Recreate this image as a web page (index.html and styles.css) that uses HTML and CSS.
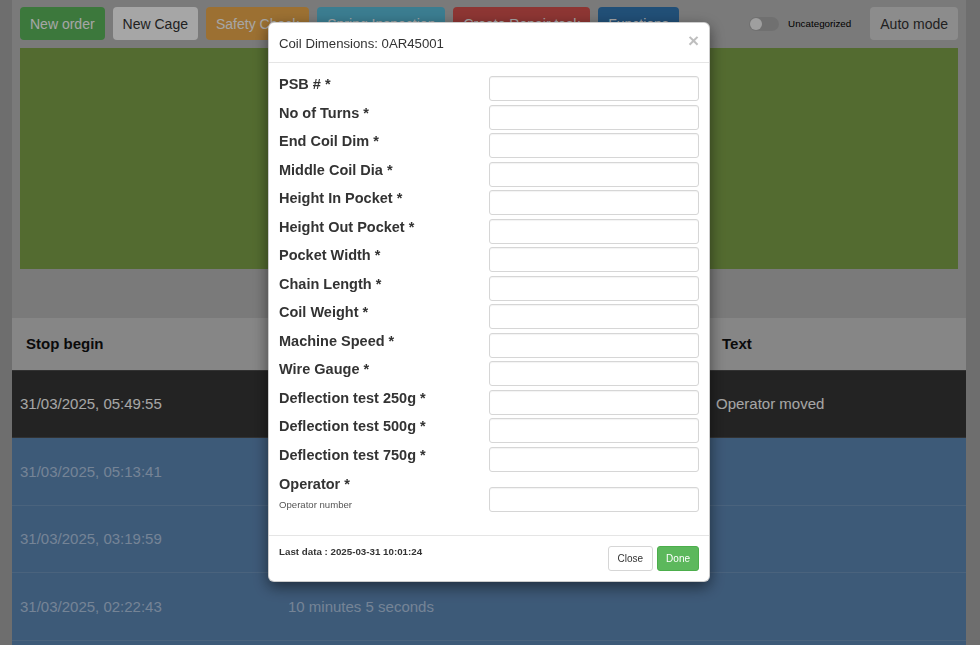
FILE: index.html
```html
<!DOCTYPE html>
<html lang="en">
<head>
    <meta charset="UTF-8">
    <meta name="viewport" content="width=device-width, initial-scale=1.0">
    <title>Stops</title>
    <link rel="stylesheet" href="styles.css">
</head>
<body>
    <div class="page">
        <div class="toolbar">
            <button class="btn btn-success">New order</button>
            <button class="btn btn-default">New Cage</button>
            <button class="btn btn-warning">Safety Check</button>
            <button class="btn btn-info">Spring Inspection</button>
            <button class="btn btn-danger">Create Repair task</button>
            <button class="btn btn-primary">Functions</button>
            <div class="toolbar-right">
                <span class="switch"></span>
                <span class="switch-label">Uncategorized</span>
                <button class="btn btn-active">Auto mode</button>
            </div>
        </div>

        <div class="status-panel"></div>

        <table class="stops">
            <colgroup>
                <col class="col-begin">
                <col class="col-duration">
                <col class="col-reason">
                <col class="col-text">
            </colgroup>
            <thead>
                <tr>
                    <th>Stop begin</th>
                    <th></th>
                    <th></th>
                    <th>Text</th>
                </tr>
            </thead>
            <tbody>
                <tr class="row-dark">
                    <td>31/03/2025, 05:49:55</td>
                    <td></td>
                    <td></td>
                    <td>Operator moved</td>
                </tr>
                <tr class="row-blue">
                    <td>31/03/2025, 05:13:41</td>
                    <td></td>
                    <td></td>
                    <td></td>
                </tr>
                <tr class="row-blue">
                    <td>31/03/2025, 03:19:59</td>
                    <td></td>
                    <td></td>
                    <td></td>
                </tr>
                <tr class="row-blue">
                    <td>31/03/2025, 02:22:43</td>
                    <td>10 minutes 5 seconds</td>
                    <td></td>
                    <td></td>
                </tr>
                <tr class="row-blue">
                    <td></td>
                    <td></td>
                    <td></td>
                    <td></td>
                </tr>
            </tbody>
        </table>
    </div>

    <div class="modal-backdrop"></div>

    <div class="modal">
        <div class="modal-dialog">
            <div class="modal-header">
                <h4 class="modal-title">Coil Dimensions: 0AR45001</h4>
                <button class="close">&times;</button>
            </div>
            <form class="modal-body">
                <label>PSB # *</label><input type="text">
                <label>No of Turns *</label><input type="text">
                <label>End Coil Dim *</label><input type="text">
                <label>Middle Coil Dia *</label><input type="text">
                <label>Height In Pocket *</label><input type="text">
                <label>Height Out Pocket *</label><input type="text">
                <label>Pocket Width *</label><input type="text">
                <label>Chain Length *</label><input type="text">
                <label>Coil Weight *</label><input type="text">
                <label>Machine Speed *</label><input type="text">
                <label>Wire Gauge *</label><input type="text">
                <label>Deflection test 250g *</label><input type="text">
                <label>Deflection test 500g *</label><input type="text">
                <label>Deflection test 750g *</label><input type="text">
                <div class="operator">
                    <label>Operator *</label>
                    <small>Operator number</small>
                </div>
                <input type="text" class="operator-input">
            </form>
            <div class="modal-footer">
                <span class="last-data">Last data : 2025-03-31 10:01:24</span>
                <div class="footer-buttons">
                    <button class="btn-sm btn-close">Close</button>
                    <button class="btn-sm btn-done">Done</button>
                </div>
            </div>
        </div>
    </div>
</body>
</html>
```

FILE: styles.css
```css
html, body {
    margin: 0;
    height: 100%;
    overflow: hidden;
}

body {
    background: #aaaaaa;
    font-family: "Liberation Sans", Arial, sans-serif;
    color: #333;
}

.page {
    margin: 0 14px 0 12px;
    min-height: 100%;
    background: #bcbcbc;
}

.toolbar {
    display: flex;
    align-items: center;
    gap: 8px;
    padding: 7px 8px 0;
}

.btn {
    height: 33px;
    padding: 0 10px;
    border: none;
    border-radius: 4px;
    font-family: "Liberation Sans", Arial, sans-serif;
    font-size: 14px;
    color: #fff;
}

.btn-success { background: #5cb85c; }
.btn-default { background: #fff; color: #333; }
.btn-warning { background: #f0ad4e; }
.btn-info { background: #5bc0de; }
.btn-danger { background: #d9534f; }
.btn-primary { background: #337ab7; }
.btn-active { background: #d8d8d8; color: #333; }

.toolbar-right {
    margin-left: auto;
    display: flex;
    align-items: center;
}

.switch {
    position: relative;
    width: 30px;
    height: 14px;
    border-radius: 7px;
    background: rgba(0, 0, 0, 0.08);
}

.switch::before {
    content: "";
    position: absolute;
    top: 1px;
    left: 1px;
    width: 12px;
    height: 12px;
    border-radius: 50%;
    background: #f4f4f4;
}

.switch-label {
    font-size: 9.8px;
    color: #000;
    margin: 0 19px 0 9px;
}

.status-panel {
    margin: 8px 8px 0;
    height: 221px;
    background: #80a54a;
}

.stops {
    width: 100%;
    margin-top: 49px;
    border-collapse: collapse;
    table-layout: fixed;
    font-size: 15px;
}

.col-begin { width: 268px; }
.col-duration { width: 214px; }
.col-reason { width: 214px; }
.col-text { width: 258px; }

.stops th {
    height: 51.5px;
    padding: 0 14px;
    text-align: left;
    font-weight: bold;
    color: #111;
    background: #cecece;
}

.stops td {
    height: 66.5px;
    padding: 0 8px;
    border-top: 1px solid rgba(255, 255, 255, 0.12);
    white-space: nowrap;
}

.row-dark td {
    background: #363636;
    color: #fff;
}

.row-blue td {
    background: #5f8ab9;
    color: #b4cbe6;
}

.modal-backdrop {
    position: fixed;
    top: 0;
    left: 0;
    right: 0;
    bottom: 0;
    background: rgba(0, 0, 0, 0.35);
}

.modal {
    position: fixed;
    top: 0;
    left: 0;
    right: 0;
    bottom: 0;
    overflow: hidden;
}

.modal-dialog {
    width: 442px;
    box-sizing: border-box;
    margin: 22px 0 0 268px;
    background: #fff;
    border: 1px solid rgba(0, 0, 0, 0.2);
    border-radius: 6px;
    box-shadow: 0 5px 15px rgba(0, 0, 0, 0.5);
}

.modal-header {
    display: flex;
    justify-content: space-between;
    align-items: flex-start;
    padding: 13px 10px 11px;
    border-bottom: 1px solid #e5e5e5;
}

.modal-title {
    margin: 0;
    font-size: 13.2px;
    font-weight: normal;
    color: #333;
}

.close {
    margin-top: -5px;
    padding: 0;
    border: none;
    background: none;
    font-family: "Liberation Sans", Arial, sans-serif;
    font-size: 19px;
    font-weight: bold;
    line-height: 1;
    color: #000;
    opacity: 0.25;
}

.modal-body {
    display: grid;
    grid-template-columns: 210px 210px;
    row-gap: 3.5px;
    align-items: start;
    padding: 13px 10px 23px;
    margin: 0;
}

.modal-body label {
    font-size: 14.5px;
    font-weight: bold;
    color: #333;
}

.modal-body input {
    height: 25px;
    box-sizing: border-box;
    margin: 0;
    border: 1px solid #d6d6d6;
    border-radius: 3px;
    box-shadow: inset 0 1px 1px rgba(0, 0, 0, 0.05);
}

.operator small {
    display: block;
    margin-top: 6px;
    font-size: 9.6px;
    color: #555;
}

.modal-body .operator-input {
    margin-top: 11.5px;
}

.modal-footer {
    display: flex;
    justify-content: space-between;
    align-items: flex-start;
    padding: 10px;
    border-top: 1px solid #e5e5e5;
}

.last-data {
    font-size: 9.75px;
    font-weight: bold;
    color: #333;
}

.footer-buttons {
    display: flex;
    gap: 4px;
}

.btn-sm {
    height: 25px;
    padding: 0 8px;
    border-radius: 3px;
    font-family: "Liberation Sans", Arial, sans-serif;
    font-size: 10px;
}

.btn-close {
    padding: 0 9px;
    background: #fff;
    border: 1px solid #d6d6d6;
    color: #333;
}

.btn-done {
    background: #5cb85c;
    border: 1px solid #4cae4c;
    color: #fff;
}
```
